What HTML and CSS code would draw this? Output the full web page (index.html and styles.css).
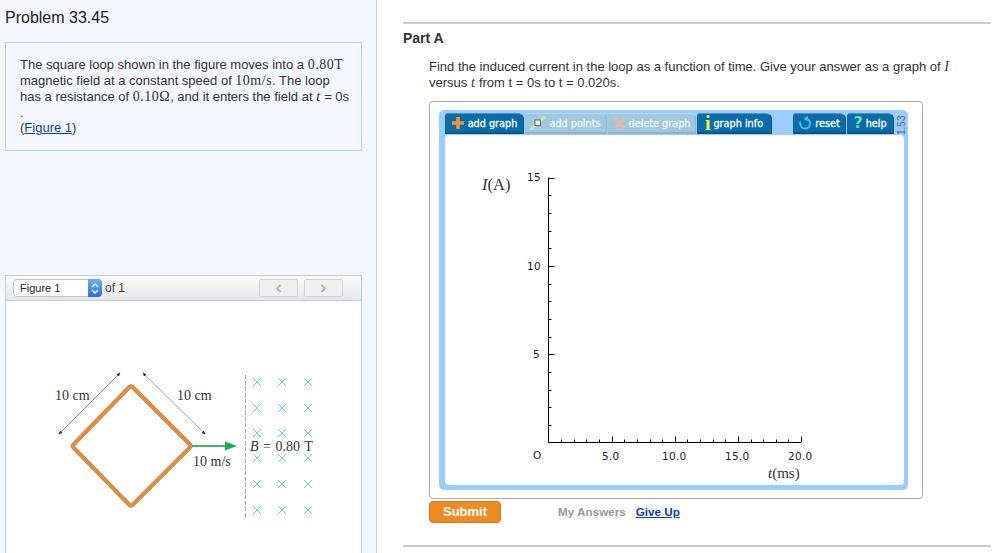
FILE: index.html
```html
<!DOCTYPE html>
<html lang="en">
<head>
    <meta charset="UTF-8">
    <title>Problem 33.45</title>
    <link rel="stylesheet" href="styles.css">
</head>
<body>
<div class="page">
    <aside class="left">
        <h1>Problem 33.45</h1>
        <div class="intro">
            <p>The square loop shown in the figure moves into a <span class="math">0.80T</span> magnetic field at a constant speed of <span class="math">10m/s</span>. The loop has a resistance of <span class="math">0.10Ω</span>, and it enters the field at <i class="math">t</i> = 0s</p>
            <p class="dot">.</p>
            <p class="figlink">(<a href="#">Figure 1</a>)</p>
        </div>

        <div class="figure">
            <div class="figure-bar">
                <div class="select">
                    <span class="select-text">Figure 1</span>
                    <span class="stepper">
                        <svg width="8" height="13" viewBox="0 0 8 13"><path d="M1 5 L4 2 L7 5 M1 8 L4 11 L7 8" fill="none" stroke="#fff" stroke-width="1.3"/></svg>
                    </span>
                </div>
                <span class="of">of 1</span>
                <div class="nav">
                    <span class="nav-btn"><svg width="7" height="9" viewBox="0 0 7 9"><path d="M5.500 1 L2 4.500 L5.500 8" fill="none" stroke="#b4b4b4" stroke-width="1.800"/></svg></span>
                    <span class="nav-btn"><svg width="7" height="9" viewBox="0 0 7 9"><path d="M1.500 1 L5 4.500 L1.500 8" fill="none" stroke="#b4b4b4" stroke-width="1.800"/></svg></span>
                </div>
            </div>
            <svg class="diagram" width="355" height="252" viewBox="6 301 355 252">
                <defs>
                    <marker id="tip" markerWidth="6" markerHeight="6" refX="5" refY="3" orient="auto-start-reverse">
                        <path d="M0 0.5 L6 3 L0 5.500 Z" fill="#333"/>
                    </marker>
                </defs>
                <path class="loop-edge" d="M129.500 387 Q131 385.500 132.500 387 L190 444.500 Q191.500 446 190 447.500 L132.500 505 Q131 506.500 129.500 505 L73.500 447.500 Q72 446 73.500 444.500 Z"/>
                <path class="loop" d="M129.500 387 Q131 385.500 132.500 387 L190 444.500 Q191.500 446 190 447.500 L132.500 505 Q131 506.500 129.500 505 L73.500 447.500 Q72 446 73.500 444.500 Z"/>
                <line x1="59" y1="434" x2="120" y2="373" stroke="#555" stroke-width="0.7" marker-start="url(#tip)" marker-end="url(#tip)"/>
                <line x1="143" y1="373" x2="205" y2="434" stroke="#777" stroke-width="0.7" marker-start="url(#tip)" marker-end="url(#tip)"/>
                <text class="fig-text" x="55" y="400">10 cm</text>
                <text class="fig-text" x="177" y="400">10 cm</text>
                <line x1="192" y1="446" x2="226" y2="446" stroke="#3cb86c" stroke-width="2"/>
                <path d="M225 441.500 L237 446 L225 450.500 Z" fill="#12b257"/>
                <text class="fig-text" x="193" y="466">10 m/s</text>
                <line x1="245.500" y1="375" x2="245.500" y2="517" stroke="#aaa" stroke-dasharray="4 2"/>
                <path class="crosses" d="M253 378 l8 8 m0 -8 l-8 8 M278 378 l8 8 m0 -8 l-8 8 M304 378 l8 8 m0 -8 l-8 8
                    M253 404 l8 8 m0 -8 l-8 8 M278 404 l8 8 m0 -8 l-8 8 M304 404 l8 8 m0 -8 l-8 8
                    M253 429 l8 8 m0 -8 l-8 8 M278 429 l8 8 m0 -8 l-8 8 M304 429 l8 8 m0 -8 l-8 8
                    M253 454 l8 8 m0 -8 l-8 8 M278 454 l8 8 m0 -8 l-8 8 M304 454 l8 8 m0 -8 l-8 8
                    M253 480 l8 8 m0 -8 l-8 8 M278 480 l8 8 m0 -8 l-8 8 M304 480 l8 8 m0 -8 l-8 8
                    M253 506 l8 8 m0 -8 l-8 8 M278 506 l8 8 m0 -8 l-8 8 M304 506 l8 8 m0 -8 l-8 8"/>
                <text class="fig-text field" x="250" y="451"><tspan font-style="italic">B</tspan> = 0.80 T</text>
            </svg>
        </div>
    </aside>

    <main class="right">
        <h2>Part A</h2>
        <p class="question">Find the induced current in the loop as a function of time. Give your answer as a graph of <i class="math">I</i> versus <i class="math">t</i> from t = 0s to t = 0.020s.</p>

        <div class="answer-box">
            <div class="frame">
                <div class="toolbar">
                    <span class="tool tool-add">
                        <svg width="14" height="14" viewBox="0 0 14 14"><path d="M7 1 V13 M1 7 H13" stroke="#f7922c" stroke-width="3.600"/></svg>add graph
                    </span>
                    <span class="tool tool-points off">
                        <svg width="16" height="14" viewBox="0 0 16 14"><line x1="0.500" y1="13.500" x2="15.500" y2="0.500" stroke="#c4ecaa" stroke-width="3"/><rect x="5" y="4" width="5.500" height="5.500" fill="#f2f2f2" stroke="#666"/></svg>add points
                    </span>
                    <span class="tool tool-delete off">
                        <svg width="13" height="13" viewBox="0 0 13 13"><path d="M1.500 1.500 L11.500 11.500 M11.500 1.500 L1.500 11.500" stroke="#efb3a2" stroke-width="2.800"/></svg>delete graph
                    </span>
                    <span class="tool tool-info">
                        <span class="info-i">i</span>graph info
                    </span>
                    <span class="tool tool-reset">
                        <svg width="14" height="14" viewBox="0 0 14 14"><path d="M8.500 2.800 A5 5 0 1 1 2.600 5.500" fill="none" stroke="#35c5ee" stroke-width="1.800"/><path d="M5.500 2.800 L10 0 V5.600 Z" fill="#35c5ee"/></svg>reset
                    </span>
                    <span class="tool tool-help">
                        <span class="help-q">?</span>help
                    </span>
                    <span class="version">1.53</span>
                </div>
                <div class="canvas">
                    <svg width="459" height="350" viewBox="445 135 459 350" id="graph"></svg>
                </div>
            </div>
        </div>

        <div class="actions">
            <button class="submit">Submit</button>
            <span class="my-answers">My Answers</span>
            <a class="give-up" href="#">Give Up</a>
        </div>
        <div class="end-rule"></div>
    </main>
</div>

<script>
    // draw the empty graph axes and tick marks
    const NS = 'http://www.w3.org/2000/svg';
    const graph = document.getElementById('graph');

    function add(tag, attrs, text) {
        const el = document.createElementNS(NS, tag);
        for (const k in attrs) el.setAttribute(k, attrs[k]);
        if (text) el.textContent = text;
        graph.appendChild(el);
        return el;
    }

    const axisLeft = 548.5, axisBottom = 442.5, axisTop = 177.5, axisRight = 801;

    add('line', { x1: axisLeft, y1: axisTop, x2: axisLeft, y2: axisBottom, stroke: '#000' });
    add('line', { x1: axisLeft, y1: axisBottom, x2: axisRight, y2: axisBottom, stroke: '#000' });

    for (let i = 1; i <= 15; i++) {
        const y = Math.round(axisBottom - i * (axisBottom - axisTop) / 15) + 0.5;
        add('line', { x1: axisLeft, y1: y, x2: axisLeft + (i % 5 ? 3 : 6), y2: y, stroke: '#000' });
    }
    for (let i = 1; i <= 20; i++) {
        const x = Math.round(axisLeft + i * (axisRight - axisLeft) / 20) + 0.5;
        add('line', { x1: x, y1: axisBottom, x2: x, y2: axisBottom - (i % 5 ? 3 : 6), stroke: '#000' });
    }

    [['15', 527, 181], ['10', 527, 270], ['5', 533, 358], ['O', 533, 459]].forEach(function (l) {
        add('text', { x: l[1], y: l[2], class: 'tick' }, l[0]);
    });
    [['5.0', 602, 460], ['10.0', 662, 460], ['15.0', 725, 460], ['20.0', 788, 460]].forEach(function (l) {
        add('text', { x: l[1], y: l[2], class: 'tick' }, l[0]);
    });

    const yLabel = add('text', { x: 482, y: 190, class: 'axis' });
    yLabel.innerHTML = '<tspan font-style="italic">I</tspan>(A)';
    const xLabel = add('text', { x: 768, y: 478, class: 'axis axis-x' });
    xLabel.innerHTML = '<tspan font-style="italic">t</tspan>(ms)';
</script>
</body>
</html>
```
FILE: styles.css
```css
html, body {
    margin: 0;
    padding: 0;
    background-color: #fff;
}
body {
    font-family: "Liberation Sans", Arial, sans-serif;
    color: #333;
    overflow: hidden;
}
.page {
    display: flex;
    width: 997px;
    height: 553px;
    overflow: hidden;
}
.math {
    font-family: "Liberation Serif", serif;
    font-size: 14px;
    letter-spacing: 0.5px;
    line-height: 0;
}
a {
    color: #0a3ea8;
}

/* left column */
.left {
    box-sizing: border-box;
    width: 377px;
    flex: none;
    padding: 9px 14px 0 5px;
    background-color: #f4f8fe;
    border-right: 1px solid #b9cfe4;
}
h1 {
    margin: 0 0 15px;
    font-size: 16px;
    line-height: 18px;
    font-weight: normal;
    color: #222;
}
.intro {
    box-sizing: border-box;
    height: 109px;
    padding: 14px 8px 0 14px;
    border: 1px solid #b9cfe4;
    font-size: 13px;
    line-height: 16px;
}
.intro p {
    margin: 0;
}
.intro .dot {
    line-height: 15px;
}
.figure {
    margin-top: 124px;
    border: 1px solid #b9cfe4;
    border-bottom: none;
    background-color: #fff;
    height: 280px;
}
.figure-bar {
    display: flex;
    align-items: center;
    box-sizing: border-box;
    height: 25px;
    padding: 0 18px 0 7px;
    background: linear-gradient(#fafafa, #e6e6e6);
    border-bottom: 1px solid #b9cfe4;
    font-size: 12px;
}
.figure-bar .select {
    display: flex;
    align-items: center;
    justify-content: space-between;
    box-sizing: border-box;
    width: 89px;
    height: 18px;
    background-color: #fff;
    border: 1px solid #c4c4c4;
    border-radius: 4px;
    font-size: 11px;
    color: #222;
}
.select-text {
    padding-left: 6px;
}
.stepper {
    display: flex;
    align-items: center;
    justify-content: center;
    width: 14px;
    height: 18px;
    margin-right: -1px;
    background: linear-gradient(#6db0f5, #2474e4);
    border-radius: 0 4px 4px 0;
}
.of {
    margin-left: 3px;
    color: #444;
}
.nav {
    display: flex;
    gap: 6px;
    margin-left: auto;
}
.nav-btn {
    display: flex;
    align-items: center;
    justify-content: center;
    box-sizing: border-box;
    width: 39px;
    height: 18px;
    border: 1px solid #d2d2d2;
    border-radius: 2px;
    background-color: #efefef;
}
.diagram {
    display: block;
}
.loop-edge {
    fill: none;
    stroke: #a98a6c;
    stroke-width: 4;
}
.loop {
    fill: none;
    stroke: #f08a2c;
    stroke-width: 2.800;
}
.fig-text {
    font-family: "Liberation Serif", serif;
    font-size: 14px;
    fill: #333;
}
.field {
    word-spacing: 1px;
}
.crosses {
    fill: none;
    stroke: #62cdf5;
    stroke-width: 1;
}

/* right column */
.right {
    flex: 1;
    padding: 22px 6px 0 26px;
}
.right h2 {
    margin: 0;
    padding-top: 6px;
    border-top: 2px solid #ccc;
    font-size: 14px;
    line-height: 17px;
    color: #333;
}
.question {
    margin: 12px 0 0 26px;
    font-size: 13px;
    line-height: 16px;
    width: 535px;
}
.answer-box {
    box-sizing: border-box;
    width: 494px;
    height: 398px;
    margin: 10px 0 0 26px;
    padding: 8px 13px 0 9px;
    border: 1px solid #aaa;
    border-radius: 4px;
}
.frame {
    box-sizing: border-box;
    width: 469px;
    height: 380px;
    padding: 3px 4px 4px 6px;
    background-color: #99ccff;
    border-radius: 5px;
}
.toolbar {
    display: flex;
    height: 22px;
    font-family: "DejaVu Sans", Verdana, sans-serif;
    font-size: 9.700px;
    color: #fff;
    -webkit-text-stroke: 0.3px #fff;
}
.tool {
    flex: none;
    display: flex;
    align-items: center;
    justify-content: center;
    gap: 3px;
    box-sizing: border-box;
    height: 21px;
    margin-right: 1px;
    background-color: #0a6cab;
    border-top: 1px solid #4d94c4;
    border-right: 1px solid #07578b;
    border-bottom: 2px solid #07578b;
    border-radius: 3px 6px 0 0;
    white-space: nowrap;
}
.tool.off {
    background-color: #a1c7df;
    border-top-color: #b9d6e8;
    border-right-color: #8fb5cd;
    border-bottom-color: #8fb5cd;
    color: #eef6fb;
    -webkit-text-stroke: 0.3px #eef6fb;
}
.tool-add { width: 79px; }
.tool-points { width: 82px; }
.tool-delete { width: 88px; }
.tool-info { width: 75px; }
.tool-reset { width: 53px; margin-left: 20px; }
.tool-help { width: 47px; }
.info-i {
    font-family: "Liberation Serif", serif;
    font-size: 20px;
    font-weight: bold;
    line-height: 18px;
    color: #f2f03a;
    -webkit-text-stroke: 0;
}
.help-q {
    font-size: 16px;
    font-weight: bold;
    line-height: 18px;
    color: #5fe0a0;
    -webkit-text-stroke: 0;
}
.version {
    flex: none;
    width: 10px;
    margin-left: 2px;
    font-family: "Liberation Sans", sans-serif;
    font-size: 10px;
    line-height: 10px;
    color: #668;
    -webkit-text-stroke: 0;
    writing-mode: vertical-rl;
    transform: rotate(180deg);
    text-align: left;
}
.canvas {
    width: 459px;
    height: 350px;
    background-color: #fff;
    border-radius: 4px;
    overflow: hidden;
}
.canvas svg {
    display: block;
}
.tick {
    font-family: "DejaVu Sans", Verdana, sans-serif;
    font-size: 10.500px;
    letter-spacing: 0.3px;
    fill: #222;
}
.axis {
    font-family: "Liberation Serif", serif;
    font-size: 16.500px;
    fill: #333;
}
.axis-x {
    font-size: 15px;
}
.actions {
    display: flex;
    align-items: center;
    height: 22px;
    margin: 2px 0 0 26px;
}
.submit {
    box-sizing: border-box;
    width: 72px;
    height: 22px;
    padding: 0 0 2px;
    background-color: #ee8c24;
    border: 1px solid #d57b1e;
    border-radius: 4px;
    color: #fff;
    font-family: "Liberation Sans", sans-serif;
    font-size: 13px;
    font-weight: bold;
}
.my-answers {
    margin: 0 0 2px 57px;
    font-size: 11.700px;
    font-weight: bold;
    color: #999;
}
.give-up {
    margin: 0 0 2px 10px;
    font-size: 11.700px;
    font-weight: bold;
}
.end-rule {
    height: 2px;
    margin-top: 22px;
    background-color: #ccc;
}
```
